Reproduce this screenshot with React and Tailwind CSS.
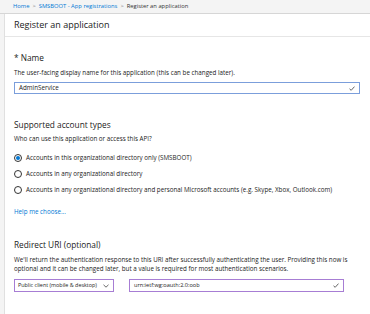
import { useState } from "react";

const font = { fontFamily: '"Open Sans", "Noto Sans", sans-serif' };

function Radio({ checked, label }) {
    return (
        <label className="flex items-center h-[16px] gap-[4px]">
            <span className="w-[8px] h-[8px] rounded-full border border-[#333] flex items-center justify-center bg-white">
                {checked && <span className="w-[4px] h-[4px] rounded-full bg-[#0078d4]" />}
            </span>
            <span className="text-[6.25px] text-[#222]">{label}</span>
        </label>
    );
}

function Check() {
    return (
        <svg width="6" height="5" viewBox="0 0 6 5" className="shrink-0">
            <path d="M0.5 2.8 L2.2 4.3 L5.5 0.6" fill="none" stroke="#555" strokeWidth="0.9" />
        </svg>
    );
}

export default function App() {
    const [nombre] = useState("AdminService");

    return (
        <div className="w-[370px] h-[314px] bg-[#f4f4f4] overflow-hidden" style={font}>
            <div className="h-[14px] flex items-center pl-[13px] text-[5.8px] gap-[3px] border-b border-[#d6d6d6]">
                <span className="text-[#0078d4]">Home</span>
                <span className="text-[#777]">&gt;</span>
                <span className="text-[#0078d4]">SMSBOOT - App registrations</span>
                <span className="text-[#777]">&gt;</span>
                <span className="text-[#333]">Register an application</span>
            </div>
            <div className="ml-[4px] bg-white border-l border-[#e0e0e0] h-full">
                <div className="h-[23px] flex items-center pl-[9px] text-[9px] text-[#222] border-b border-[#e6e6e6]">
                    Register an application
                </div>
                <div className="pl-[9px] pr-[10px]">
                    <h2 className="text-[8.3px] text-[#222] mt-[15px] leading-[12px]">* Name</h2>
                    <p className="text-[6.25px] text-[#222] mt-[5px] leading-[8px]">
                        The user-facing display name for this application (this can be changed later).
                    </p>
                    <div className="mt-[5px] h-[12px] border border-[#7b9edb] flex items-center justify-between px-[4px]">
                        <span className="text-[6.25px] text-[#222]">{nombre}</span>
                        <Check />
                    </div>

                    <h2 className="text-[8.3px] text-[#222] mt-[25px] leading-[12px]">Supported account types</h2>
                    <p className="text-[6.25px] text-[#222] mt-[4px] leading-[8px]">
                        Who can use this application or access this API?
                    </p>
                    <div className="mt-[7px] flex flex-col">
                        <Radio checked label="Accounts in this organizational directory only (SMSBOOT)" />
                        <Radio label="Accounts in any organizational directory" />
                        <Radio label="Accounts in any organizational directory and personal Microsoft accounts (e.g. Skype, Xbox, Outlook.com)" />
                    </div>
                    <p className="text-[6.25px] text-[#0078d4] mt-[10px] leading-[8px]">Help me choose...</p>

                    <h2 className="text-[8.3px] text-[#222] mt-[23px] leading-[12px]">Redirect URI (optional)</h2>
                    <p className="text-[6.25px] text-[#222] mt-[4px] leading-[9px] w-[340px]">
                        We'll return the authentication response to this URI after successfully authenticating the user. Providing this now is optional and it can be changed later, but a value is required for most authentication scenarios.
                    </p>
                    <div className="mt-[6px] flex gap-[15px]">
                        <div className="w-[100px] h-[13px] border border-[#a77dd4] flex items-center justify-between pl-[3px] pr-[4px]">
                            <span className="text-[5.4px] text-[#222] whitespace-nowrap">Public client (mobile &amp; desktop)</span>
                            <svg width="6" height="4" viewBox="0 0 6 4" className="shrink-0">
                                <path d="M0.5 0.8 L3 3.2 L5.5 0.8" fill="none" stroke="#444" strokeWidth="0.8" />
                            </svg>
                        </div>
                        <div className="w-[215px] h-[13px] border border-[#a77dd4] flex items-center justify-between px-[4px]">
                            <span className="text-[5.6px] text-[#222]">urn:ietf:wg:oauth:2.0:oob</span>
                            <Check />
                        </div>
                    </div>
                </div>
            </div>
        </div>
    );
}
